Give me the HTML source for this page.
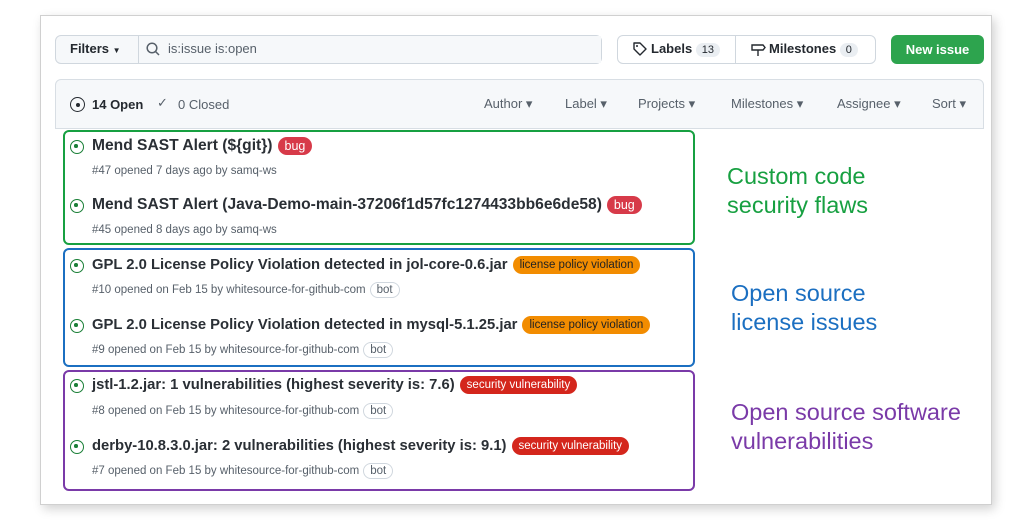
<!DOCTYPE html>
<html><head><meta charset="utf-8"><style>
*{box-sizing:border-box;margin:0;padding:0}
body{width:1024px;height:528px;background:#fff;font-family:"Liberation Sans",sans-serif;position:relative;overflow:hidden;color:#24292f}
.card{position:absolute;left:40px;top:15px;width:952px;height:490px;background:#fff;border:1px solid #d0d0d0;box-shadow:3px 4px 10px rgba(0,0,0,.18)}
.a{position:absolute}
.btn{border:1px solid #d0d7de;border-radius:6px;background:#f6f8fa}
.t{position:absolute;font-size:14.8px;font-weight:bold;color:#2a2f35;white-space:nowrap;display:flex;align-items:center;gap:5px}
.m{position:absolute;font-size:11.5px;color:#57606a;white-space:nowrap;display:flex;align-items:center;gap:4px}
.lab{display:inline-block;color:#fff;font-size:11.5px;font-weight:normal;border-radius:10px;padding:2px 7px;line-height:14px}
.bot{border:1px solid #d0d7de;border-radius:10px;padding:1px 6px;font-size:11.5px;color:#57606a}
.ic{position:absolute;width:14px;height:14px;border:1.7px solid #1a7f37;border-radius:50%}
.ic:after{content:"";position:absolute;left:3.3px;top:3.3px;width:3.6px;height:3.6px;background:#1a7f37;border-radius:50%}
.box{position:absolute;left:63px;width:632px;border:2.2px solid;border-radius:6px}
.ann{position:absolute;font-size:23.5px;line-height:29px}
.f{position:absolute;font-size:13px;color:#57606a;top:96px}
</style></head><body>
<div class="card"></div>
<div class="a btn" style="left:55px;top:35px;width:547px;height:29px;background:#f6f8fa"></div>
<div class="a" style="left:138px;top:36px;width:463px;height:27px;background:#f6f8fa;border-left:1px solid #d0d7de"></div>
<div class="a" style="left:70px;top:41px;font-size:13px;font-weight:bold">Filters <span style="font-size:8px">▼</span></div>
<svg class="a" style="left:145px;top:41px" width="16" height="16" viewBox="0 0 16 16"><circle cx="7" cy="7" r="4.8" fill="none" stroke="#57606a" stroke-width="1.5"/><path d="M10.5 10.5L14 14" stroke="#57606a" stroke-width="1.5"/></svg>
<div class="a" style="left:168px;top:41px;font-size:13px;color:#57606a">is:issue is:open</div>
<div class="a btn" style="left:617px;top:35px;width:259px;height:29px;background:#fff"></div>
<div class="a" style="left:735px;top:36px;width:1px;height:27px;background:#d0d7de"></div>
<svg class="a" style="left:632px;top:41px" width="16" height="16" viewBox="0 0 16 16"><path d="M2 2h6l6 6-6 6-6-6z" fill="none" stroke="#24292f" stroke-width="1.4" stroke-linejoin="round"/><circle cx="5" cy="5" r="1" fill="#24292f"/></svg>
<div class="a" style="left:651px;top:41px;font-size:13px;font-weight:bold">Labels <span style="background:#eaeef2;border-radius:9px;padding:1px 6px;font-weight:normal;font-size:11px">13</span></div>
<svg class="a" style="left:750px;top:41px" width="16" height="16" viewBox="0 0 16 16"><path d="M2 4h11l2 2.5-2 2.5H2zM8 9v6" fill="none" stroke="#24292f" stroke-width="1.4"/></svg>
<div class="a" style="left:769px;top:41px;font-size:13px;font-weight:bold">Milestones <span style="background:#eaeef2;border-radius:9px;padding:1px 6px;font-weight:normal;font-size:11px">0</span></div>
<div class="a" style="left:891px;top:35px;width:93px;height:29px;background:#2da44e;border-radius:6px;color:#fff;font-size:13px;font-weight:bold;text-align:center;line-height:29px">New issue</div>
<div class="a" style="left:55px;top:79px;width:929px;height:50px;background:#f6f8fa;border:1px solid #d8dee4;border-radius:6px 6px 0 0"></div>
<div class="a" style="left:70px;top:97px;width:15px;height:15px;border:1.6px solid #24292f;border-radius:50%"></div>
<div class="a" style="left:75.5px;top:102.5px;width:4px;height:4px;background:#24292f;border-radius:50%"></div>
<div class="a" style="left:92px;top:97px;font-size:13px;font-weight:bold">14 Open</div>
<div class="a" style="left:157px;top:95px;font-size:13px;color:#57606a">✓</div>
<div class="a" style="left:178px;top:97px;font-size:13px;color:#57606a">0 Closed</div>
<div class="f" style="left:484px">Author ▾</div>
<div class="f" style="left:565px">Label ▾</div>
<div class="f" style="left:638px">Projects ▾</div>
<div class="f" style="left:731px">Milestones ▾</div>
<div class="f" style="left:837px">Assignee ▾</div>
<div class="f" style="left:932px">Sort ▾</div>

<div class="box" style="top:130px;height:115px;border-color:#17a041"></div>
<div class="box" style="top:248px;height:119px;border-color:#1b6fc1"></div>
<div class="box" style="top:370px;height:121px;border-color:#7a3aa8"></div>

<div class="ic" style="left:70px;top:140px"></div>
<div class="t" style="left:92px;top:137px;font-size:15.6px">Mend SAST Alert (${git}) <span class="lab" style="background:#d73a49;font-size:12.5px">bug</span></div>
<div class="m" style="left:92px;top:165px">#47 opened 7 days ago by samq-ws</div>
<div class="ic" style="left:70px;top:199px"></div>
<div class="t" style="left:92px;top:196px;font-size:15.6px">Mend SAST Alert (Java-Demo-main-37206f1d57fc1274433bb6e6de58) <span class="lab" style="background:#d73a49;font-size:12.5px">bug</span></div>
<div class="m" style="left:92px;top:224px">#45 opened 8 days ago by samq-ws</div>

<div class="ic" style="left:70px;top:259px"></div>
<div class="t" style="left:92px;top:256px">GPL 2.0 License Policy Violation detected in jol-core-0.6.jar <span class="lab" style="background:#f28c00;color:#222">license policy violation</span></div>
<div class="m" style="left:92px;top:282px">#10 opened on Feb 15 by whitesource-for-github-com <span class="bot">bot</span></div>
<div class="ic" style="left:70px;top:319px"></div>
<div class="t" style="left:92px;top:316px">GPL 2.0 License Policy Violation detected in mysql-5.1.25.jar <span class="lab" style="background:#f28c00;color:#222">license policy violation</span></div>
<div class="m" style="left:92px;top:342px">#9 opened on Feb 15 by whitesource-for-github-com <span class="bot">bot</span></div>

<div class="ic" style="left:70px;top:379px"></div>
<div class="t" style="left:92px;top:376px">jstl-1.2.jar: 1 vulnerabilities (highest severity is: 7.6) <span class="lab" style="background:#d4261c">security vulnerability</span></div>
<div class="m" style="left:92px;top:403px">#8 opened on Feb 15 by whitesource-for-github-com <span class="bot">bot</span></div>
<div class="ic" style="left:70px;top:440px"></div>
<div class="t" style="left:92px;top:437px">derby-10.8.3.0.jar: 2 vulnerabilities (highest severity is: 9.1) <span class="lab" style="background:#d4261c">security vulnerability</span></div>
<div class="m" style="left:92px;top:463px">#7 opened on Feb 15 by whitesource-for-github-com <span class="bot">bot</span></div>

<div class="ann" style="left:727px;top:162px;color:#17a041">Custom code<br>security flaws</div>
<div class="ann" style="left:731px;top:279px;color:#1b6fc1">Open source<br>license issues</div>
<div class="ann" style="left:731px;top:398px;color:#7a3aa8">Open source software<br>vulnerabilities</div>
</body></html>
